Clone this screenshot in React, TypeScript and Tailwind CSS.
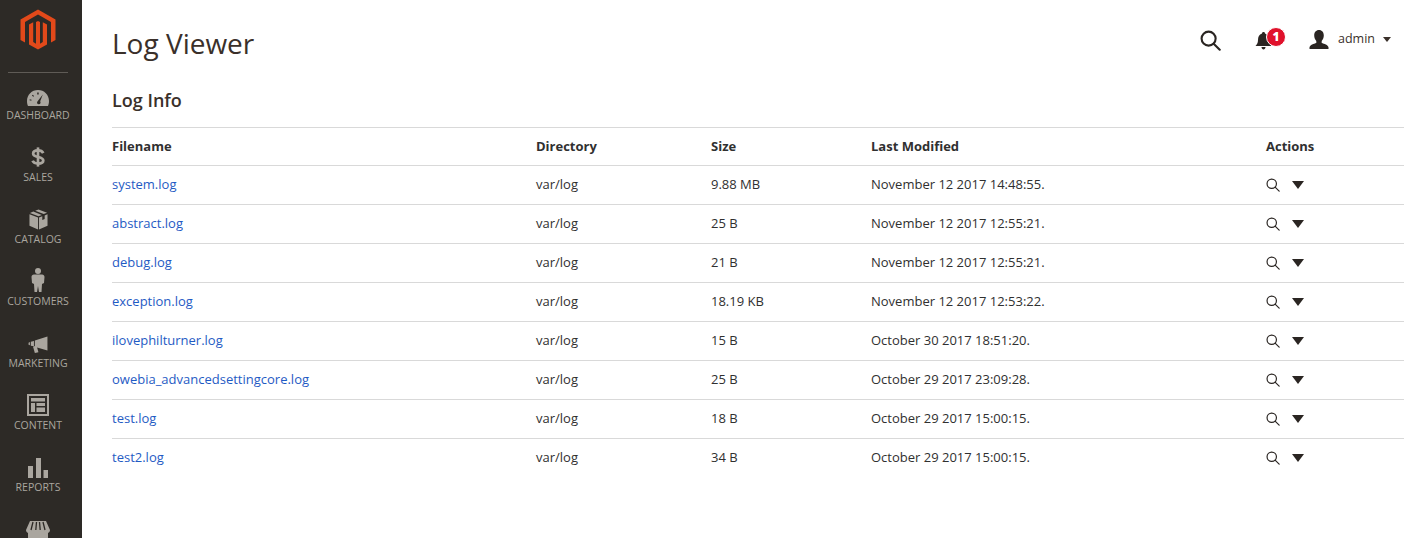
import React from 'react';

const logs = [
  { name: 'system.log', size: '9.88 MB', modified: 'November 12 2017 14:48:55.' },
  { name: 'abstract.log', size: '25 B', modified: 'November 12 2017 12:55:21.' },
  { name: 'debug.log', size: '21 B', modified: 'November 12 2017 12:55:21.' },
  { name: 'exception.log', size: '18.19 KB', modified: 'November 12 2017 12:53:22.' },
  { name: 'ilovephilturner.log', size: '15 B', modified: 'October 30 2017 18:51:20.' },
  { name: 'owebia_advancedsettingcore.log', size: '25 B', modified: 'October 29 2017 23:09:28.' },
  { name: 'test.log', size: '18 B', modified: 'October 29 2017 15:00:15.' },
  { name: 'test2.log', size: '34 B', modified: 'October 29 2017 15:00:15.' },
];

const Logo = () => (
  <svg width="36" height="42" viewBox="0 0 36 42">
    <path fill="#e2491a" d="M18 0.5 L35.5 10.5 V31 L31 33.5 V13 L18 5.5 L5 13 V33.5 L0.5 31 V10.5 Z" />
    <path fill="#e2491a" d="M9 15.5 L13.2 13.2 V33 L16 34.7 V13 L18 12 L20 13 V34.7 L22.8 33 V13.2 L27 15.5 V35.5 L18 40.5 L9 35.5 Z" />
  </svg>
);

const icons: Record<string, React.ReactNode> = {
  DASHBOARD: (
    <svg width="22" height="16" viewBox="0 0 22 16" fill="#aaa69f">
      <path fillRule="evenodd" d="M11 0C4.800 0 0 4.800 0 11c0 2 .4 3.600 1 5h20c.6-1.400 1-3 1-5C22 4.800 17.200 0 11 0ZM4.300 10.800l-1.800-.5.3-1 1.800.5ZM6.300 6.800 4.900 5.500l.8-.8L7.100 6ZM10.200 4.400V2.400h1.500v2ZM15.800 4.500l-2.600 6.700c.8 1.100.3 3-1.400 3-1.600 0-2.400-1.800-1.200-3Z" />
    </svg>
  ),
  SALES: (
    <svg width="14" height="22" viewBox="0 0 16 24" fill="none" stroke="#aaa69f">
      <path strokeWidth="3.200" d="M14 7.500C13 5.500 11 4.500 8 4.500c-3 0-5.500 1.300-5.500 3.700 0 5 11.500 2.600 11.500 7.800 0 2.400-2.600 3.500-6 3.500-3.200 0-5.200-1.100-6.200-3.200" />
      <path strokeWidth="3" d="M8 1v22" />
    </svg>
  ),
  CATALOG: (
    <svg width="19" height="21" viewBox="0 0 20 22" fill="#aaa69f">
      <path d="M6.500 1.800 10 .5l9 3.300-3.500 1.500ZM4.500 2.700l9 3.500L10 7.600 1 4.200ZM.5 5.500l9 3.500v12.500l-9-3.800ZM10.500 9l3.500-1.400v4l2.500-1V6.700l3-1.200v12.200l-9 3.800Z" />
    </svg>
  ),
  CUSTOMERS: (
    <svg width="14" height="24" viewBox="0 0 14 24" fill="#aaa69f">
      <circle cx="7" cy="3" r="3" />
      <path d="M3 6.500h8c1.500 0 2.500 1 2.500 2.500l-.5 6-2 1-.5 8H8l-1-6-1 6H3.500l-.5-8-2-1-.5-6C.5 7.500 1.500 6.500 3 6.500Z" />
    </svg>
  ),
  MARKETING: (
    <svg width="22" height="18" viewBox="0 0 22 20" fill="#aaa69f">
      <path d="M21.500.5V16L10 12.700l1.500 5.300-4 1-2-7L7.500 11V5ZM6.500 5.500V11.500L3 10.700V6.300ZM2 6.800v3.400L.5 9.600V7.400Z" />
    </svg>
  ),
  CONTENT: (
    <svg width="22" height="22" viewBox="0 0 22 22" fill="#aaa69f">
      <path fillRule="evenodd" d="M0 0h22v22H0ZM2 2v18h18V2ZM4 4h14v3.500H4ZM4 9h4v9H4ZM9.500 9H18v3H9.500ZM9.500 13.500H18V18H9.500Z" />
    </svg>
  ),
  REPORTS: (
    <svg width="20" height="20" viewBox="0 0 20 20" fill="#aaa69f">
      <path d="M0 8h5v12H0ZM8 0h5v20H8ZM15.500 12H20v8h-4.500Z" />
    </svg>
  ),
  STORES: (
    <svg width="24" height="22" viewBox="0 0 24 22" fill="#aaa69f">
      <path d="M4 0h16l4 9c0 1.500-1 2.500-2 3v10H2V12C1 11.500 0 10.500 0 9Z" />
      <path stroke="#2d2a26" strokeWidth="1.300" d="M7 1 5 9M10.500 1 9.800 9M13.500 1l.7 8M17 1l2 8" />
    </svg>
  ),
};

const navItems = ['DASHBOARD', 'SALES', 'CATALOG', 'CUSTOMERS', 'MARKETING', 'CONTENT', 'REPORTS'];

const SearchIcon = ({ size, width }: { size: number; width: number }) => (
  <svg width={size} height={size} viewBox="0 0 20 20" fill="none" stroke="#2a2522" strokeWidth={width}>
    <circle cx="8.200" cy="8.200" r="6.700" />
    <path strokeLinecap="round" d="M13 13l5.800 5.800" />
  </svg>
);

const Sidebar = () => (
  <aside className="w-[82px] h-[538px] shrink-0 overflow-hidden bg-[#2d2a26] flex flex-col items-center pr-[6px]">
    <div className="h-[73px] w-[60px] shrink-0 border-b border-[#5f5b56] flex justify-center pt-[9px]">
      <Logo />
    </div>
    <nav className="w-full pt-[11px] flex flex-col">
      {navItems.map((item) => (
        <div key={item} className="h-[62px] shrink-0 flex flex-col items-center">
          <div className="h-[22px] flex items-end justify-center">{icons[item]}</div>
          <span className="mt-[1px] text-[10.5px] leading-[16px] text-[#aaa69f]">{item}</span>
        </div>
      ))}
      <div className="h-[22px] shrink-0 flex justify-center pt-[3px]">{icons.STORES}</div>
    </nav>
  </aside>
);

const Header = () => (
  <header className="h-[71px] flex items-start justify-between pr-[18px]">
    <h1 className="pt-[23px] text-[28px] leading-[40px] font-normal text-[#3a302a]">Log Viewer</h1>
    <div className="flex items-center pt-[30px]">
      <SearchIcon size={21} width={2} />
      <div className="relative ml-[34px] mt-[1px]">
        <svg width="17" height="18" viewBox="0 0 17 18" fill="#2a2522">
          <path d="M8.500 0C9.500 0 10 .7 10 1.500 13 2.300 14 5 14 8c0 3 1 4.500 2.500 6H.500C2 12.500 3 11 3 8c0-3 1-5.700 4-6.500C7 .7 7.500 0 8.500 0ZM6.500 15h4c0 1.500-1 2.500-2 2.500s-2-1-2-2.500Z" />
        </svg>
        <span className="absolute left-[11px] top-[-5px] w-[18px] h-[18px] rounded-full bg-[#e0112b] border border-white text-white text-[12px] leading-[18px] font-extrabold text-center box-content">1</span>
      </div>
      <svg className="ml-[37px] -mt-[2px]" width="20" height="20" viewBox="0 0 20 20" fill="#2a2522">
        <path d="M10 0c3 0 4.800 2.300 4.800 5.200 0 2.300-.8 4.300-2.100 5.700v2c2.500 1 6.300 1.700 6.800 4.300V19H.500v-1.800c.5-2.600 4.300-3.300 6.800-4.300v-2C6 9.500 5.200 7.500 5.200 5.200 5.200 2.300 7 0 10 0Z" />
      </svg>
      <span className="ml-[9px] -mt-[2px] text-[12.5px] text-[#3a302a]">admin</span>
      <span className="ml-[8px] -mt-[2px] w-0 h-0 border-x-[4px] border-x-transparent border-t-[5px] border-t-[#3a302a]" />
    </div>
  </header>
);

const LogTable = () => (
  <table className="w-[1292px] table-fixed border-collapse text-[13px] text-[#303030]">
    <colgroup>
      <col className="w-[424px]" />
      <col className="w-[175px]" />
      <col className="w-[160px]" />
      <col className="w-[395px]" />
      <col className="w-[138px]" />
    </colgroup>
    <thead>
      <tr className="h-[38px] border-y border-[#d9d9d9] text-left font-bold text-[#303030]">
        <th>Filename</th>
        <th>Directory</th>
        <th>Size</th>
        <th>Last Modified</th>
        <th>Actions</th>
      </tr>
    </thead>
    <tbody>
      {logs.map((log) => (
        <tr key={log.name} className="h-[39px] border-b border-[#d9d9d9] last:border-b-transparent">
          <td><a href="#" className="text-[#1f5bc4]">{log.name}</a></td>
          <td>var/log</td>
          <td>{log.size}</td>
          <td>{log.modified}</td>
          <td>
            <div className="flex items-center h-[14px]">
              <SearchIcon size={14} width={1.700} />
              <span className="ml-[12px] w-0 h-0 border-x-[6px] border-x-transparent border-t-[8px] border-t-[#2a2522]" />
            </div>
          </td>
        </tr>
      ))}
    </tbody>
  </table>
);

export default function App() {
  return (
    <div className="flex h-[538px] w-[1409px] overflow-hidden bg-white font-['Open_Sans',sans-serif]">
      <Sidebar />
      <main className="flex-1 pl-[30px]">
        <Header />
        <h2 className="mt-[16px] mb-[14px] text-[18px] leading-[26px] font-semibold text-[#3a302a]">Log Info</h2>
        <LogTable />
      </main>
    </div>
  );
}
